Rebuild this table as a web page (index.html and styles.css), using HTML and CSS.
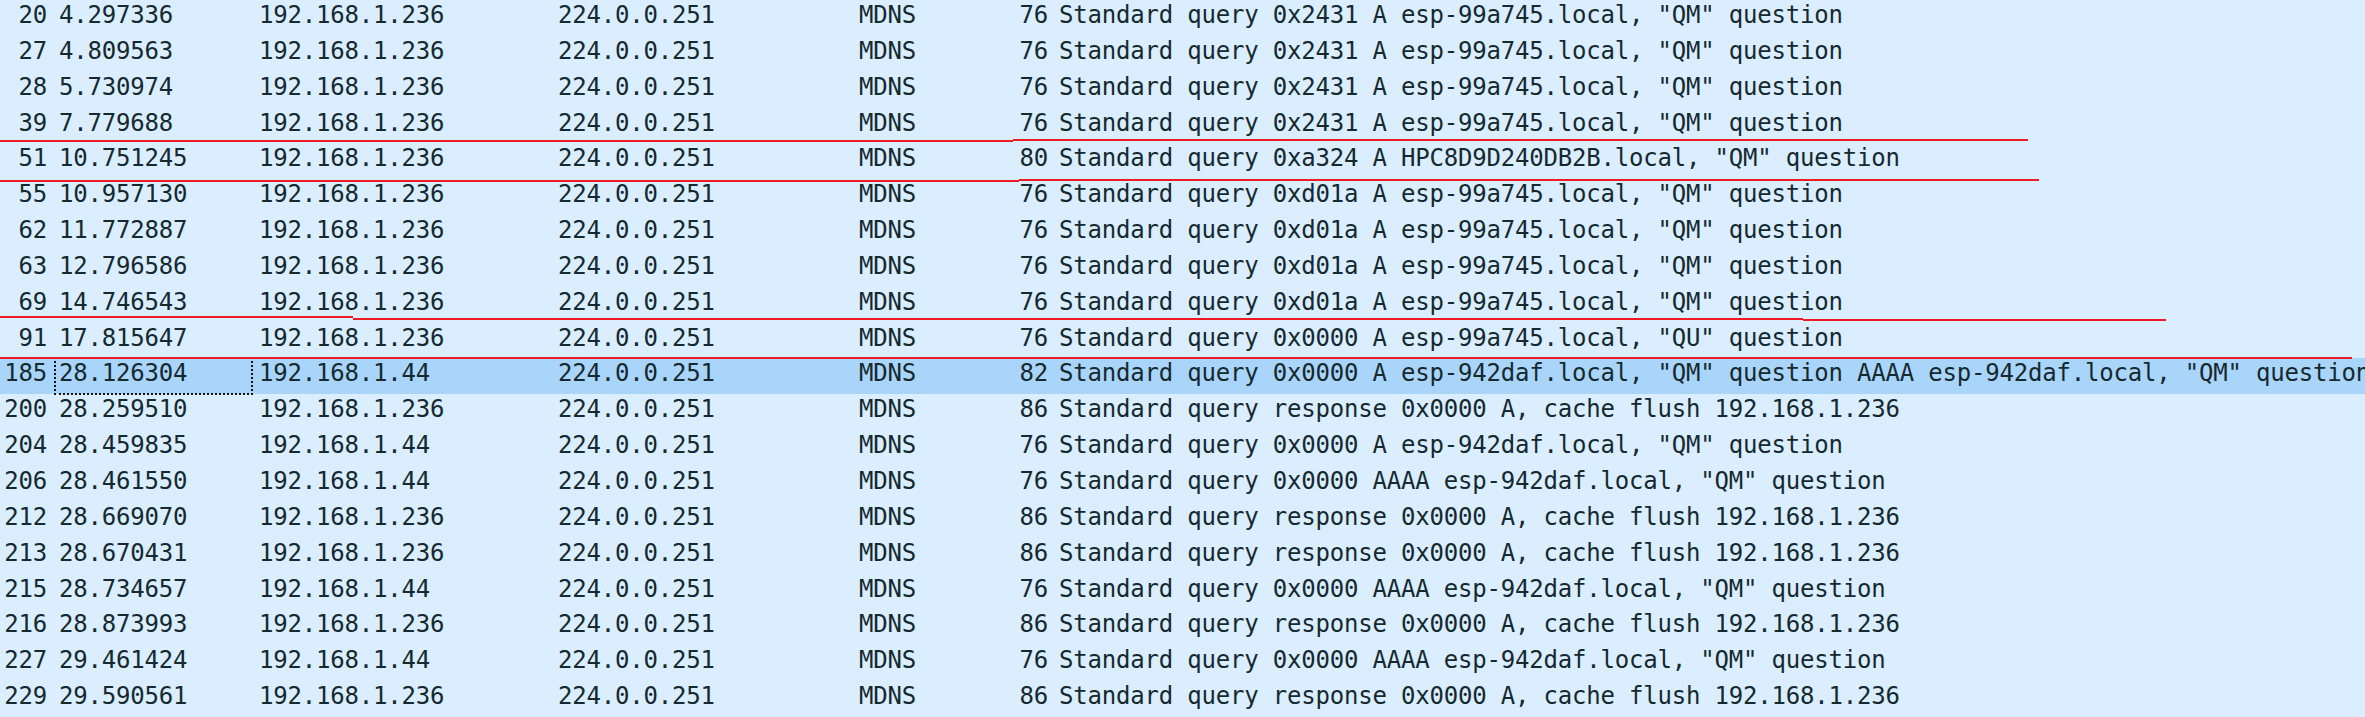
FILE: index.html
```html
<!DOCTYPE html>
<html lang="en">
<head>
<meta charset="utf-8">
<title>Packet list</title>
<link rel="stylesheet" href="styles.css">
</head>
<body>
<div class="packet-list">
  <div class="row"><span class="c-no">20</span><span class="c-time">4.297336</span><span class="c-src">192.168.1.236</span><span class="c-dst">224.0.0.251</span><span class="c-proto">MDNS</span><span class="c-len">76</span><span class="c-info">Standard query 0x2431 A esp-99a745.local, "QM" question</span></div>
  <div class="row"><span class="c-no">27</span><span class="c-time">4.809563</span><span class="c-src">192.168.1.236</span><span class="c-dst">224.0.0.251</span><span class="c-proto">MDNS</span><span class="c-len">76</span><span class="c-info">Standard query 0x2431 A esp-99a745.local, "QM" question</span></div>
  <div class="row"><span class="c-no">28</span><span class="c-time">5.730974</span><span class="c-src">192.168.1.236</span><span class="c-dst">224.0.0.251</span><span class="c-proto">MDNS</span><span class="c-len">76</span><span class="c-info">Standard query 0x2431 A esp-99a745.local, "QM" question</span></div>
  <div class="row"><span class="c-no">39</span><span class="c-time">7.779688</span><span class="c-src">192.168.1.236</span><span class="c-dst">224.0.0.251</span><span class="c-proto">MDNS</span><span class="c-len">76</span><span class="c-info">Standard query 0x2431 A esp-99a745.local, "QM" question</span></div>
  <div class="row"><span class="c-no">51</span><span class="c-time">10.751245</span><span class="c-src">192.168.1.236</span><span class="c-dst">224.0.0.251</span><span class="c-proto">MDNS</span><span class="c-len">80</span><span class="c-info">Standard query 0xa324 A HPC8D9D240DB2B.local, "QM" question</span></div>
  <div class="row"><span class="c-no">55</span><span class="c-time">10.957130</span><span class="c-src">192.168.1.236</span><span class="c-dst">224.0.0.251</span><span class="c-proto">MDNS</span><span class="c-len">76</span><span class="c-info">Standard query 0xd01a A esp-99a745.local, "QM" question</span></div>
  <div class="row"><span class="c-no">62</span><span class="c-time">11.772887</span><span class="c-src">192.168.1.236</span><span class="c-dst">224.0.0.251</span><span class="c-proto">MDNS</span><span class="c-len">76</span><span class="c-info">Standard query 0xd01a A esp-99a745.local, "QM" question</span></div>
  <div class="row"><span class="c-no">63</span><span class="c-time">12.796586</span><span class="c-src">192.168.1.236</span><span class="c-dst">224.0.0.251</span><span class="c-proto">MDNS</span><span class="c-len">76</span><span class="c-info">Standard query 0xd01a A esp-99a745.local, "QM" question</span></div>
  <div class="row"><span class="c-no">69</span><span class="c-time">14.746543</span><span class="c-src">192.168.1.236</span><span class="c-dst">224.0.0.251</span><span class="c-proto">MDNS</span><span class="c-len">76</span><span class="c-info">Standard query 0xd01a A esp-99a745.local, "QM" question</span></div>
  <div class="row"><span class="c-no">91</span><span class="c-time">17.815647</span><span class="c-src">192.168.1.236</span><span class="c-dst">224.0.0.251</span><span class="c-proto">MDNS</span><span class="c-len">76</span><span class="c-info">Standard query 0x0000 A esp-99a745.local, "QU" question</span></div>
  <div class="row selected"><span class="c-no">185</span><span class="c-time focused">28.126304</span><span class="c-src">192.168.1.44</span><span class="c-dst">224.0.0.251</span><span class="c-proto">MDNS</span><span class="c-len">82</span><span class="c-info">Standard query 0x0000 A esp-942daf.local, "QM" question AAAA esp-942daf.local, "QM" question</span></div>
  <div class="row"><span class="c-no">200</span><span class="c-time">28.259510</span><span class="c-src">192.168.1.236</span><span class="c-dst">224.0.0.251</span><span class="c-proto">MDNS</span><span class="c-len">86</span><span class="c-info">Standard query response 0x0000 A, cache flush 192.168.1.236</span></div>
  <div class="row"><span class="c-no">204</span><span class="c-time">28.459835</span><span class="c-src">192.168.1.44</span><span class="c-dst">224.0.0.251</span><span class="c-proto">MDNS</span><span class="c-len">76</span><span class="c-info">Standard query 0x0000 A esp-942daf.local, "QM" question</span></div>
  <div class="row"><span class="c-no">206</span><span class="c-time">28.461550</span><span class="c-src">192.168.1.44</span><span class="c-dst">224.0.0.251</span><span class="c-proto">MDNS</span><span class="c-len">76</span><span class="c-info">Standard query 0x0000 AAAA esp-942daf.local, "QM" question</span></div>
  <div class="row"><span class="c-no">212</span><span class="c-time">28.669070</span><span class="c-src">192.168.1.236</span><span class="c-dst">224.0.0.251</span><span class="c-proto">MDNS</span><span class="c-len">86</span><span class="c-info">Standard query response 0x0000 A, cache flush 192.168.1.236</span></div>
  <div class="row"><span class="c-no">213</span><span class="c-time">28.670431</span><span class="c-src">192.168.1.236</span><span class="c-dst">224.0.0.251</span><span class="c-proto">MDNS</span><span class="c-len">86</span><span class="c-info">Standard query response 0x0000 A, cache flush 192.168.1.236</span></div>
  <div class="row"><span class="c-no">215</span><span class="c-time">28.734657</span><span class="c-src">192.168.1.44</span><span class="c-dst">224.0.0.251</span><span class="c-proto">MDNS</span><span class="c-len">76</span><span class="c-info">Standard query 0x0000 AAAA esp-942daf.local, "QM" question</span></div>
  <div class="row"><span class="c-no">216</span><span class="c-time">28.873993</span><span class="c-src">192.168.1.236</span><span class="c-dst">224.0.0.251</span><span class="c-proto">MDNS</span><span class="c-len">86</span><span class="c-info">Standard query response 0x0000 A, cache flush 192.168.1.236</span></div>
  <div class="row"><span class="c-no">227</span><span class="c-time">29.461424</span><span class="c-src">192.168.1.44</span><span class="c-dst">224.0.0.251</span><span class="c-proto">MDNS</span><span class="c-len">76</span><span class="c-info">Standard query 0x0000 AAAA esp-942daf.local, "QM" question</span></div>
  <div class="row"><span class="c-no">229</span><span class="c-time">29.590561</span><span class="c-src">192.168.1.236</span><span class="c-dst">224.0.0.251</span><span class="c-proto">MDNS</span><span class="c-len">86</span><span class="c-info">Standard query response 0x0000 A, cache flush 192.168.1.236</span></div>

  <div class="marks" aria-hidden="true">
    <div class="mark m1a"></div><div class="mark m1b"></div>
    <div class="mark m2a"></div><div class="mark m2b"></div>
    <div class="mark m3a"></div><div class="mark m3b"></div><div class="mark m3c"></div>
    <div class="mark m4"></div>
  </div>
</div>
</body>
</html>
```

FILE: styles.css
```css
html, body {
  margin: 0;
  padding: 0;
  background: #daeeff;
}

body {
  width: 2365px;
  height: 717px;
  overflow: hidden;
}

.packet-list {
  position: relative;
  width: 2365px;
  font-family: "DejaVu Sans Mono", "Liberation Mono", monospace;
  font-size: 24px;
  letter-spacing: -0.2px;
  color: #15292f;
}

.row {
  display: grid;
  grid-template-columns: 55px 197px 302px 301px 145px 52px 1fr;
  height: 35.85px;
  line-height: 30px;
  background: #daeeff;
  white-space: nowrap;
}

.row.selected {
  background: #aad5fa;
}

.row > span {
  display: block;
  overflow: hidden;
  white-space: pre;
}

.c-no {
  text-align: right;
  padding-right: 8px;
}

.c-time {
  padding-left: 4px;
}

.c-src {
  padding-left: 7px;
}

.c-dst {
  padding-left: 4px;
}

.c-proto {
  padding-left: 4px;
}

.c-len {
  text-align: right;
  padding-right: 4px;
}

.c-info {
  padding-left: 7px;
  overflow: visible;
}

.focused {
  outline: 2px dotted #111;
  outline-offset: -1px;
}

/* red hand-drawn underline annotations */
.marks {
  position: absolute;
  left: 0;
  top: 0;
  width: 100%;
  height: 100%;
  pointer-events: none;
}

.mark {
  position: absolute;
  height: 2px;
  background: #ed1c24;
}

.m1a { left: 0; top: 140px; width: 1013px; }
.m1b { left: 1013px; top: 139px; width: 1015px; }

.m2a { left: 0; top: 180px; width: 1019px; }
.m2b { left: 1019px; top: 179px; width: 1020px; }

.m3a { left: 0; top: 316px; width: 353px; }
.m3b { left: 353px; top: 318px; width: 1450px; }
.m3c { left: 1803px; top: 319px; width: 363px; }

.m4 { left: 0; top: 357px; width: 2352px; }
```
